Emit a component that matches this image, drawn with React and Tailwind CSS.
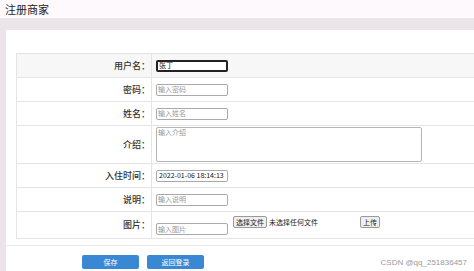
import React from 'react';

const font = { fontFamily: '"Noto Sans CJK SC", "Liberation Sans", sans-serif' };

function Row({ label, h = 'h-[24px]', shade = false, children }) {
  return (
    <div className={`flex border-t border-[#e4e4e4] ${h} ${shade ? 'bg-[#f7f7f7]' : ''}`}>
      <div className="w-[135px] shrink-0 flex items-center justify-end text-[9px] font-medium text-[#333] border-r border-[#e4e4e4] pr-[1px]">
        {label}
      </div>
      <div className="flex-1 flex items-center pl-[4px]">{children}</div>
    </div>
  );
}

function Field({ placeholder, value, focus }) {
  return (
    <div
      className={`w-[72px] h-[12px] flex items-center px-[1px] text-[7px] leading-none bg-white rounded-[2px] ${
        focus ? 'border-2 border-[#222] text-[#111]' : 'border border-[#a9a9a9] text-[#999]'
      }`}
    >
      {value ? <span className="text-[#111]">{value}</span> : placeholder}
    </div>
  );
}

export default function App() {
  return (
    <div className="w-[474px] h-[271px] overflow-hidden bg-[#fdf9fc] relative" style={font}>
      <div className="h-[18px] pl-[5px] text-[11px] leading-[18px] text-[#222]">注册商家</div>
      <div className="h-[253px] bg-[#ebe5e9] pl-[6px] pt-[12px]">
        <div className="h-full bg-white pt-[23px]">
          <div className="ml-[10px] border-l border-b border-[#e4e4e4]">
            <Row label="用户名：" shade>
              <Field focus value="张丁" />
            </Row>
            <Row label="密码：">
              <Field placeholder="输入密码" />
            </Row>
            <Row label="姓名：">
              <Field placeholder="输入姓名" />
            </Row>
            <Row label="介绍：" h="h-[38px]">
              <div className="w-[266px] h-[35px] border border-[#b5b5b5] rounded-[2px] text-[7px] text-[#999] px-[1px] leading-[9px] mt-[-1px]">
                输入介绍
              </div>
            </Row>
            <Row label="入住时间：">
              <div className="w-[72px] h-[12px] flex items-center px-[2px] border border-[#a9a9a9] rounded-[2px] text-[7px] text-[#111] leading-none whitespace-nowrap overflow-hidden">
                2022-01-06 18:14:13
              </div>
            </Row>
            <Row label="说明：">
              <Field placeholder="输入说明" />
            </Row>
            <Row label="图片：" h="h-[27px]">
              <div className="flex items-start h-full pt-[4px]">
                <div className="mt-[7px]">
                  <Field placeholder="输入图片" />
                </div>
                <div className="ml-[5px] h-[12px] px-[2px] flex items-center text-[7px] text-[#222] bg-[#efefef] border border-[#999] rounded-[2px] leading-none">
                  选择文件
                </div>
                <div className="ml-[2px] h-[12px] flex items-center text-[7px] text-[#222] leading-none w-[91px]">
                  未选择任何文件
                </div>
                <div className="h-[12px] px-[2px] flex items-center text-[7px] text-[#222] bg-[#efefef] border border-[#999] rounded-[2px] leading-none">
                  上传
                </div>
              </div>
            </Row>
          </div>
          <div className="mt-[6px] border-t border-[#ebe7ea] pt-[9px] pl-[76px] flex gap-[8px]">
            <div className="w-[57px] h-[14px] bg-[#3a87d4] rounded-[2px] text-white text-[7px] flex items-center justify-center">
              保存
            </div>
            <div className="w-[57px] h-[14px] bg-[#3a87d4] rounded-[2px] text-white text-[7px] flex items-center justify-center">
              返回登录
            </div>
          </div>
        </div>
      </div>
      <div className="absolute right-[7px] bottom-[4px] text-[8px] text-[#9a9a9a] leading-none" style={{ fontFamily: '"Liberation Sans", sans-serif' }}>
        CSDN @qq_251836457
      </div>
    </div>
  );
}
